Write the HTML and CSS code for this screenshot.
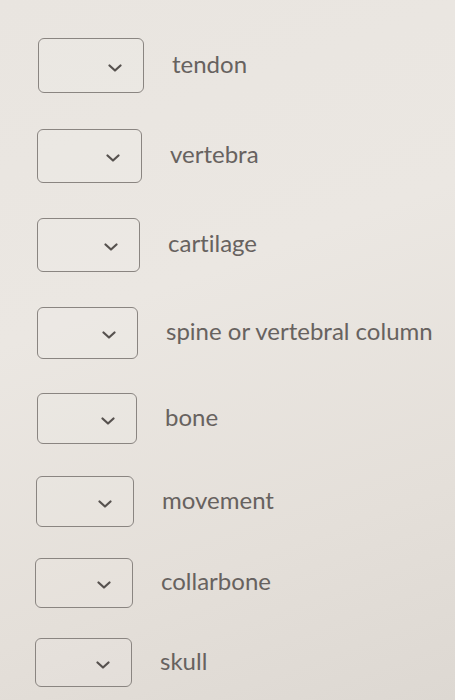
FILE: index.html
```html
<!DOCTYPE html>
<html lang="en">
<head>
<meta charset="utf-8">
<title>Matching</title>
<link rel="stylesheet" href="styles.css">
</head>
<body>
<ul class="match-list">
  <li class="match-row">
    <div class="select"><svg class="chev" viewBox="0 0 14 8"><path d="M1.5 1.5 L7 6.5 L12.5 1.5"/></svg></div>
    <span class="term">tendon</span>
  </li>
  <li class="match-row">
    <div class="select"><svg class="chev" viewBox="0 0 14 8"><path d="M1.5 1.5 L7 6.5 L12.5 1.5"/></svg></div>
    <span class="term">vertebra</span>
  </li>
  <li class="match-row">
    <div class="select"><svg class="chev" viewBox="0 0 14 8"><path d="M1.5 1.5 L7 6.5 L12.5 1.5"/></svg></div>
    <span class="term">cartilage</span>
  </li>
  <li class="match-row">
    <div class="select"><svg class="chev" viewBox="0 0 14 8"><path d="M1.5 1.5 L7 6.5 L12.5 1.5"/></svg></div>
    <span class="term">spine or vertebral column</span>
  </li>
  <li class="match-row">
    <div class="select"><svg class="chev" viewBox="0 0 14 8"><path d="M1.5 1.5 L7 6.5 L12.5 1.5"/></svg></div>
    <span class="term">bone</span>
  </li>
  <li class="match-row">
    <div class="select"><svg class="chev" viewBox="0 0 14 8"><path d="M1.5 1.5 L7 6.5 L12.5 1.5"/></svg></div>
    <span class="term">movement</span>
  </li>
  <li class="match-row">
    <div class="select"><svg class="chev" viewBox="0 0 14 8"><path d="M1.5 1.5 L7 6.5 L12.5 1.5"/></svg></div>
    <span class="term">collarbone</span>
  </li>
  <li class="match-row">
    <div class="select"><svg class="chev" viewBox="0 0 14 8"><path d="M1.5 1.5 L7 6.5 L12.5 1.5"/></svg></div>
    <span class="term">skull</span>
  </li>
</ul>
</body>
</html>
```
FILE: styles.css
```css
html, body {
  margin: 0;
  padding: 0;
  width: 455px;
  height: 700px;
  overflow: hidden;
}

body {
  background: linear-gradient(160deg, #e9e5e0 0%, #ebe7e2 40%, #e4dfd9 75%, #ddd8d2 100%);
  font-family: Lato, "Open Sans", sans-serif;
  color: #67625f;
}

.match-list {
  list-style: none;
  margin: 0;
  padding: 38px 0 0 0;
  display: flex;
  flex-direction: column;
}

.match-row {
  --x: 38px;
  --w: 106px;
  --h: 55px;
  --mt: 0px;
  display: flex;
  align-items: center;
  gap: 28px;
  margin-left: var(--x);
  margin-top: var(--mt);
  height: var(--h);
}

.match-row:nth-child(2) { --x: 37px; --w: 105px; --h: 54px; --mt: 36px; }
.match-row:nth-child(3) { --x: 37px; --w: 103px; --h: 54px; --mt: 35px; }
.match-row:nth-child(4) { --x: 37px; --w: 101px; --h: 52px; --mt: 35px; }
.match-row:nth-child(5) { --x: 37px; --w: 100px; --h: 51px; --mt: 34px; }
.match-row:nth-child(6) { --x: 36px; --w: 98px;  --h: 51px; --mt: 32px; }
.match-row:nth-child(7) { --x: 35px; --w: 98px;  --h: 50px; --mt: 31px; }
.match-row:nth-child(8) { --x: 35px; --w: 97px;  --h: 49px; --mt: 30px; }

.select {
  box-sizing: border-box;
  width: var(--w);
  height: var(--h);
  border: 1.5px solid #8a8581;
  border-radius: 6px;
  background: rgba(255, 255, 255, 0.08);
  display: flex;
  align-items: center;
  justify-content: flex-end;
  padding: 4px 21px 0 0;
  flex-shrink: 0;
}

.chev {
  width: 14px;
  height: 8px;
  display: block;
}

.chev path {
  fill: none;
  stroke: #56514e;
  stroke-width: 2.2;
  stroke-linecap: round;
  stroke-linejoin: round;
}

.term {
  font-size: 24px;
  line-height: 28px;
  margin-top: -4px;
  white-space: nowrap;
  font-variant-ligatures: none;
}
```
